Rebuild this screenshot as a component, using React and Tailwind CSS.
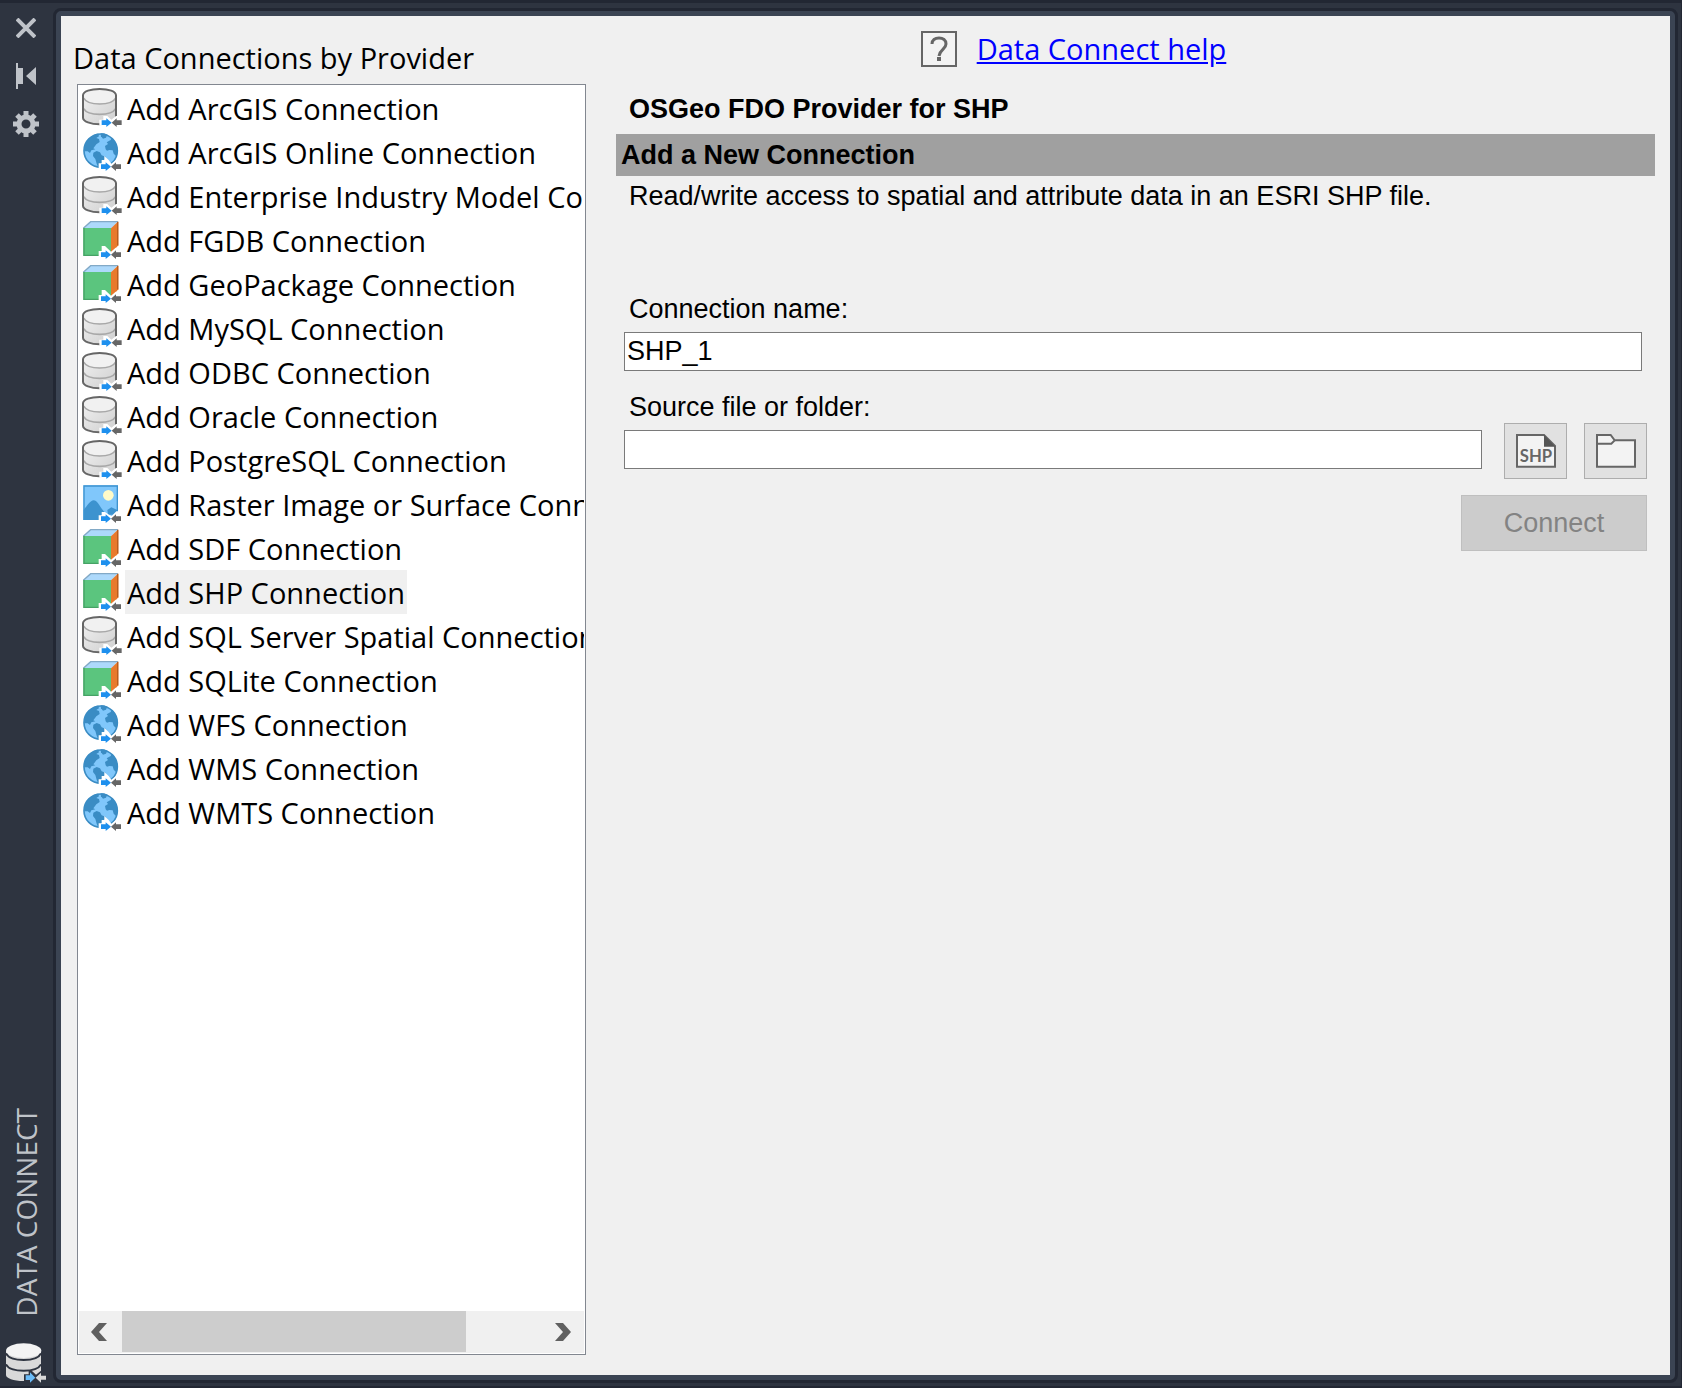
import React, { useState } from 'react';

const providers = [
  { name: 'Add ArcGIS Connection', type: 'database' },
  { name: 'Add ArcGIS Online Connection', type: 'web' },
  { name: 'Add Enterprise Industry Model Connection', type: 'database' },
  { name: 'Add FGDB Connection', type: 'file' },
  { name: 'Add GeoPackage Connection', type: 'file' },
  { name: 'Add MySQL Connection', type: 'database' },
  { name: 'Add ODBC Connection', type: 'database' },
  { name: 'Add Oracle Connection', type: 'database' },
  { name: 'Add PostgreSQL Connection', type: 'database' },
  { name: 'Add Raster Image or Surface Connection', type: 'raster' },
  { name: 'Add SDF Connection', type: 'file' },
  { name: 'Add SHP Connection', type: 'file' },
  { name: 'Add SQL Server Spatial Connection', type: 'database' },
  { name: 'Add SQLite Connection', type: 'file' },
  { name: 'Add WFS Connection', type: 'web' },
  { name: 'Add WMS Connection', type: 'web' },
  { name: 'Add WMTS Connection', type: 'web' },
];

// Blue and gray arrows in the corner of every provider icon
const Arrows = () => (
  <>
    <path d="M57 97h14v-6l16 13-16 13v-6H57z" fill="#1e90ee" />
    <path d="M87 104l15-13v6h15v14h-15v6z" fill="#666" />
  </>
);

const DatabaseIcon = () => (
  <svg viewBox="0 0 120 120" className="h-10 w-10 shrink-0" aria-hidden="true">
    <defs>
      <linearGradient id="dbBody" x1="0" x2="1" y1="0" y2="1">
        <stop offset="0" stopColor="#efefef" />
        <stop offset="1" stopColor="#cfcfcf" />
      </linearGradient>
    </defs>
    <path d="M4 20v70c0 11 22 19 48 19s50-8 50-19V20z" fill="url(#dbBody)" />
    <ellipse cx="53" cy="24" rx="49" ry="22" fill="#f1f1f1" />
    <path d="M5 30c6 12 24 18 48 18s42-6 48-18M5 62c6 11 24 17 48 17s42-6 48-17" fill="none" stroke="#a8a8a8" strokeWidth="5" />
    <path d="M3 22C3 10 26 3 53 3s49 7 49 19v67c0 11-22 20-49 20S3 100 3 89z" fill="none" stroke="#666" strokeWidth="6" />
    <path d="M52 113V95h12V84h12l12 11 14-11h8v29z" fill="#fff" />
    <g transform="translate(2 0)">
      <Arrows />
    </g>
  </svg>
);

const GlobeIcon = () => (
  <svg viewBox="0 0 120 120" className="h-10 w-10 shrink-0" aria-hidden="true">
    <circle cx="56" cy="56" r="50" fill="#80c7fb" stroke="#3a8cc4" strokeWidth="5" />
    <path d="M6 58C7 38 14 24 26 15c8-7 16-9 23-10l2 8-8 5 8 3 2 9-10 7-9 12 6 3-12 3-4 8-7-5z" fill="#3a8cc4" />
    <path d="M56 4c8 0 14 1 20 4l-4 9-9 3-6-7z" fill="#3a8cc4" />
    <path d="M71 52l-2-10 9-6-4-5 12-7 3-7c10 8 18 24 18 40l-4 16-8-8-3-10-10-1-7 2z" fill="#3a8cc4" />
    <path d="M34 62l10-5 10 4 5 9 13 5-8 14-8 12-8 4-4-10-4-14-7-9z" fill="#3a8cc4" />
    <path d="M50 112V94h9V84h8V72l13 12 8 11 14-11h6v28z" fill="#fff" />
    <Arrows />
  </svg>
);

const BoxIcon = () => (
  <svg viewBox="0 0 120 120" className="h-10 w-10 shrink-0" aria-hidden="true">
    <path d="M4 25L26 4h82L88 25z" fill="#add9fb" />
    <path d="M4 25L26 5h82" fill="none" stroke="#82a9c6" strokeWidth="4" />
    <path d="M87 25l22-21v72L87 102z" fill="#e87a2c" />
    <path d="M107 6v70" stroke="#b85c1e" strokeWidth="4" />
    <path d="M4 24h83v84H4z" fill="#5bc57e" />
    <path d="M6 24v82h46" fill="none" stroke="#46a265" strokeWidth="4" />
    <path d="M50 112V93h9V78h10l18 17 14-12h10v29z" fill="#fff" />
    <Arrows />
  </svg>
);

const RasterIcon = () => (
  <svg viewBox="0 0 120 120" className="h-10 w-10 shrink-0" aria-hidden="true">
    <path d="M4 4h104v104H4z" fill="#80c7fb" />
    <path d="M5 78c10-12 20-29 30-29 12 0 20 24 36 39l-10 20H5z" fill="#3d93cf" />
    <path d="M76 78l12-8 18 8v14H78z" fill="#3d93cf" />
    <circle cx="79" cy="34" r="16" fill="#fffbc8" />
    <path d="M6 6h100v100H6z" fill="none" stroke="#3d93cf" strokeWidth="4" />
    <path d="M50 112V94h9V84h10l12 8 8 4 14-14h13v30z" fill="#fff" />
    <Arrows />
  </svg>
);

const icons = {
  database: DatabaseIcon,
  web: GlobeIcon,
  file: BoxIcon,
  raster: RasterIcon,
};

const SideBar = () => (
  <div className="flex w-[53px] shrink-0 flex-col items-center pt-[9px] pr-[2px] text-[#bfc3c9]">
    <button type="button" aria-label="Close" className="flex h-8 w-8 items-center justify-center">
      <svg viewBox="0 0 20 20" className="h-5 w-5">
        <path d="M1 1l18 18M19 1L1 19" stroke="currentColor" strokeWidth="4" />
      </svg>
    </button>
    <button type="button" aria-label="Auto-hide" className="mt-4 flex h-8 w-8 items-center justify-center">
      <svg viewBox="0 0 20 26" className="h-[26px] w-5" fill="currentColor">
        <path d="M0 0h2v5h5v16H2v5H0zM20 4v18L10 13z" />
      </svg>
    </button>
    <button type="button" aria-label="Properties" className="mt-4 flex h-8 w-8 items-center justify-center">
      <svg viewBox="0 0 26 26" className="h-[26px] w-[26px]">
        <circle cx="13" cy="13" r="7" fill="none" stroke="currentColor" strokeWidth="5" />
        <path
          d="M13 0v5M13 21v5M0 13h5M21 13h5M4 4l4 4M18 18l4 4M22 4l-4 4M8 18l-4 4"
          stroke="currentColor"
          strokeWidth="5"
        />
      </svg>
    </button>
    <span className="mt-auto mb-[26px] rotate-180 text-[28px] leading-8 whitespace-nowrap [writing-mode:vertical-rl]">
      DATA CONNECT
    </span>
    <svg viewBox="0 0 120 120" className="mb-[3px] h-10 w-10" aria-hidden="true">
      <path d="M0 24v72c0 10 22 18 53 18s52-8 52-18V24z" fill="#d9d9d9" />
      <ellipse cx="53" cy="23" rx="53" ry="22" fill="#f3f3f3" />
      <path d="M0 31c6 13 26 20 53 20s46-7 52-20M0 64c6 12 26 19 53 19s46-7 52-19" fill="none" stroke="#2e3440" strokeWidth="6" />
      <path d="M54 120V94h14V84h10l12 11 15-12h15v37z" fill="#2e3440" />
      <path d="M59 97h13v-9l16 16-16 15v-8H59z" fill="#6bbcf8" />
      <path d="M89 104l16-15v9h15v12h-15v9z" fill="#d9d9d9" />
    </svg>
  </div>
);

const ProviderList = ({ selected, onSelect }) => (
  <div className="ml-1 flex flex-1 flex-col border border-[#828790] bg-white p-px">
    <ul className="flex-1 overflow-hidden">
      {providers.map((p) => {
        const Icon = icons[p.type];
        return (
          <li key={p.name}>
            <button type="button" onClick={() => onSelect(p.name)} className="flex h-11 w-full items-center pl-[3px]">
              <Icon />
              <span
                className={`ml-[3px] h-11 px-[2px] text-[29px] leading-[46px] whitespace-nowrap ${
                  selected === p.name ? 'bg-[#f0f0f0]' : ''
                }`}
              >
                {p.name}
              </span>
            </button>
          </li>
        );
      })}
    </ul>
    {/* Horizontal scroll bar */}
    <div className="flex h-[42px] bg-[#f0f0f0] text-[#606060]">
      <button type="button" aria-label="Scroll left" className="flex w-[43px] items-center justify-center pr-1">
        <svg viewBox="0 0 16 18" className="h-[18px] w-4" fill="currentColor">
          <path d="M0 9L8 0h8L8 9l8 9H8z" />
        </svg>
      </button>
      <div className="flex flex-1">
        <div className="h-[41px] w-[82%] bg-[#cdcdcd]" />
      </div>
      <button type="button" aria-label="Scroll right" className="flex w-[43px] items-center justify-center">
        <svg viewBox="0 0 16 18" className="h-[18px] w-4" fill="currentColor">
          <path d="M16 9L8 0H0l8 9-8 9h8z" />
        </svg>
      </button>
    </div>
  </div>
);

const ConnectionForm = () => {
  const [name, setName] = useState('SHP_1');
  const [source, setSource] = useState('');

  return (
    <form
      onSubmit={(e) => e.preventDefault()}
      className="flex flex-col font-['Liberation_Sans',Arial,sans-serif] text-[27px] leading-8"
    >
      <h1 className="pl-[13px] font-bold">OSGeo FDO Provider for SHP</h1>
      <h2 className="mt-[9px] mr-[15px] bg-[#a0a0a0] pl-[5px] leading-[42px] font-bold">Add a New Connection</h2>
      <p className="mt-1 pl-[13px]">Read/write access to spatial and attribute data in an ESRI SHP file.</p>

      <label htmlFor="conn-name" className="mt-[81px] pl-[13px]">Connection name:</label>
      <input
        id="conn-name"
        type="text"
        value={name}
        onChange={(e) => setName(e.target.value)}
        className="mt-[7px] mr-7 ml-2 h-[39px] border border-[#7a7a7a] bg-white px-[2px]"
      />

      <label htmlFor="conn-source" className="mt-5 pl-[13px]">Source file or folder:</label>
      <div className="mr-[23px] ml-2 flex items-start">
        <input
          id="conn-source"
          type="text"
          value={source}
          onChange={(e) => setSource(e.target.value)}
          className="mt-[7px] h-[39px] min-w-0 flex-1 border border-[#7a7a7a] bg-white px-[2px]"
        />
        <button
          type="button"
          aria-label="Browse for SHP file"
          className="ml-[22px] flex h-14 w-[63px] items-center justify-center border border-[#adadad] bg-[#e1e1e1]"
        >
          <svg viewBox="0 0 120 102" className="h-[34px] w-10">
            <path d="M3 3h81l33 33v62H3z" fill="#f3f3f3" stroke="#666" strokeWidth="6" />
            <path d="M84 2l34 36H84z" fill="#555" />
            <text x="60" y="85" textAnchor="middle" fontSize="50" fontWeight="bold" fill="#666" fontFamily="Lato, sans-serif">
              SHP
            </text>
          </svg>
        </button>
        <button
          type="button"
          aria-label="Browse for folder"
          className="ml-[17px] flex h-14 w-[63px] items-center justify-center border border-[#adadad] bg-[#e1e1e1]"
        >
          <svg viewBox="0 0 120 102" className="h-[34px] w-10" fill="#f3f3f3" stroke="#666" strokeWidth="6">
            <path d="M3 3h41l12 16h61v79H3z" />
            <path d="M3 29h43l10-10" />
          </svg>
        </button>
      </div>

      <button
        type="submit"
        disabled
        className="mt-4 mr-[23px] h-14 w-[186px] self-end border border-[#bfbfbf] bg-[#cccccc] text-[#838383]"
      >
        Connect
      </button>
    </form>
  );
};

const App = () => {
  const [selected, setSelected] = useState('Add SHP Connection');

  return (
    <div className="flex min-h-screen border-t-[3px] border-r border-b-2 border-[#222733] bg-[#2e3440] font-['Open_Sans','Segoe_UI',sans-serif] text-black">
      <SideBar />
      <div className="mt-[5px] mr-[3px] mb-[3px] flex min-w-0 flex-1 rounded-lg border-[3px] border-[#222733] bg-[#3b4453] p-[5px]">
        <main className="flex min-w-0 flex-1 bg-[#f0f0f0]">
          <section className="flex w-[525px] shrink-0 flex-col pt-[22px] pb-5 pl-3">
            <h2 className="mb-[6px] text-[29px] leading-10">Data Connections by Provider</h2>
            <ProviderList selected={selected} onSelect={setSelected} />
          </section>

          <section className="ml-[30px] flex min-w-0 flex-1 flex-col pt-[13px]">
            <div className="mb-6 flex items-center justify-center pr-[139px]">
              <svg viewBox="0 0 36 36" className="mr-[20px] h-9 w-9" aria-hidden="true">
                <path d="M1 1h34v34H1z" fill="#f3f3f3" stroke="#666" strokeWidth="2" />
                <path d="M11 13c0-4 3-6 7-6s7 2 7 6c0 5-6 5-7 12" fill="none" stroke="#666" strokeWidth="3" />
                <path d="M16 26h4v4h-4z" fill="#666" />
              </svg>
              <a href="#help" className="text-[29px] leading-10 text-[#0000ff] underline">Data Connect help</a>
            </div>
            <ConnectionForm />
          </section>
        </main>
      </div>
    </div>
  );
};

export default App;
